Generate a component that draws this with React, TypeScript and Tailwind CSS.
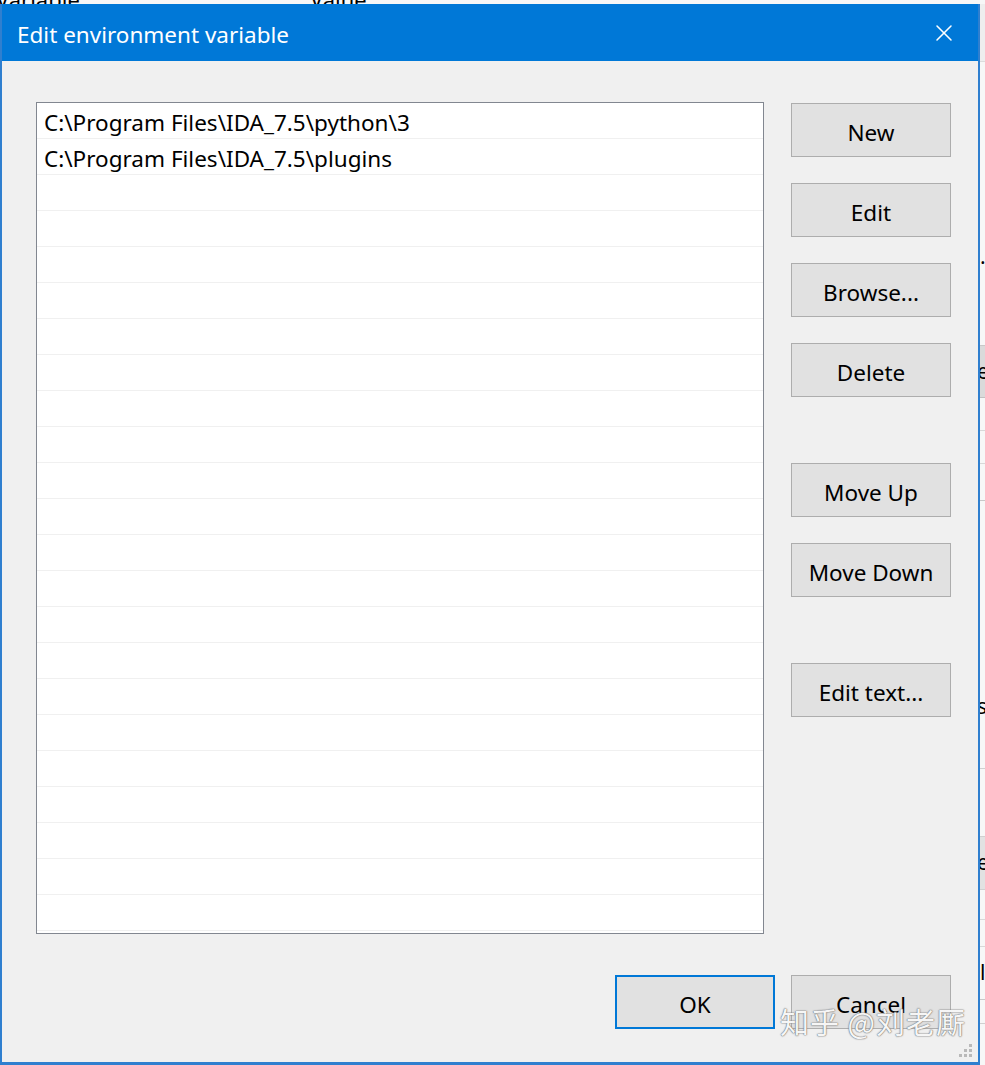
import { X } from "lucide-react";

const paths = ["C:\\Program Files\\IDA_7.5\\python\\3", "C:\\Program Files\\IDA_7.5\\plugins"];

const font = { fontFamily: '"Segoe UI", "Noto Sans", "Open Sans", sans-serif' };

function Btn({ label, primary = false, className = "" }: { label: string; primary?: boolean; className?: string }) {
  return (
    <button
      className={`w-[160px] h-[54px] shrink-0 bg-[#e1e1e1] text-[22.5px] text-black flex items-center justify-center pt-[5px] ${
        primary ? "border-2 border-[#0078d7]" : "border border-[#adadad]"
      } ${className}`}
    >
      {label}
    </button>
  );
}

export default function App() {
  const rows = Array.from({ length: 23 }, (_, i) => paths[i] ?? "");

  return (
    <div className="w-[985px] h-[1065px] overflow-hidden bg-[#f3f3f3] flex flex-col" style={font}>
      {/* background window peeking above */}
      <div className="h-[4px] overflow-hidden relative shrink-0 bg-[#f7f7f7]">
        <div className="absolute left-[-4px] top-[-17px] text-[22px] text-black">Variable</div>
        <div className="absolute left-[310px] top-[-17px] text-[22px] text-black">Value</div>
      </div>

      <div className="flex flex-1">
        <div className="relative w-[980px] flex flex-col border-x-2 border-b-[3px] border-[#2f7fcf] bg-[#f0f0f0]">
          {/* title bar */}
          <div className="h-[57px] bg-[#0078d7] flex items-center justify-between pl-[15px] pr-[20px] pt-[5px] shrink-0">
            <span className="text-white text-[22.5px]">Edit environment variable</span>
            <X className="w-[28px] h-[28px] text-white -mt-[5px]" strokeWidth={1.3} />
          </div>

          {/* body */}
          <div className="flex pl-[34px] pt-[41px] gap-[27px]">
            <div className="w-[728px] h-[832px] bg-white border border-[#828790] overflow-hidden flex flex-col">
              {rows.map((p, i) => (
                <div
                  key={i}
                  className="h-[36px] shrink-0 border-b border-[#f0f0f0] pl-[7px] pt-[6px] flex items-center text-[22.5px] text-black leading-none"
                >
                  {p}
                </div>
              ))}
            </div>

            <div className="flex flex-col pt-[1px]">
              <Btn label="New" />
              <Btn label="Edit" className="mt-[26px]" />
              <Btn label="Browse..." className="mt-[26px]" />
              <Btn label="Delete" className="mt-[26px]" />
              <Btn label="Move Up" className="mt-[66px]" />
              <Btn label="Move Down" className="mt-[26px]" />
              <Btn label="Edit text..." className="mt-[66px]" />
            </div>
          </div>

          {/* footer buttons */}
          <div className="flex pl-[613px] pt-[41px] gap-[16px]">
            <Btn label="OK" primary />
            <Btn label="Cancel" />
          </div>

          {/* watermark */}
          <div
            className="absolute left-[778px] top-[996px] text-[29px] text-white/95 tracking-[1px]"
            style={{
              fontFamily: '"Noto Sans CJK SC", sans-serif',
              textShadow: "0 0 1px #777, 0 0 1px #777, 0 0 2px #999",
            }}
          >
            知乎 @刘老厮
          </div>

          {/* resize grip */}
          <svg className="absolute right-[4px] bottom-[3px]" width="16" height="16" viewBox="0 0 16 16">
            {[
              [11, 1],
              [11, 6],
              [6, 6],
              [11, 11],
              [6, 11],
              [1, 11],
            ].map(([x, y], i) => (
              <rect key={i} x={x} y={y} width="3" height="3" fill="#b9b9b9" />
            ))}
          </svg>
        </div>

        {/* background window sliver on the right */}
        <div className="w-[5px] flex flex-col bg-[#f7f7f7] text-[21px] text-black overflow-hidden">
          <div className="h-[58px] bg-[#eeeeee] border-b border-[#dcdcdc]" />
          <div className="h-[200px]" />
          <div className="h-[84px] border-b border-[#c8c8c8] leading-[0px]">·</div>
          <div className="h-[52px] bg-[#dadada] border-b border-[#c0c0c0] flex items-center -ml-[3px]">e</div>
          <div className="h-[33px] border-b border-[#d8d8d8]" />
          <div className="h-[33px] border-b border-[#d8d8d8]" />
          <div className="h-[37px] border-b border-[#c8c8c8]" />
          <div className="h-[208px] flex flex-col justify-start pt-[190px] -ml-[3px]">s.</div>
          <div className="h-[60px] border-b border-[#d0d0d0]" />
          <div className="h-[68px] border-b border-[#d0d0d0]" />
          <div className="h-[53px] bg-[#e2e2e2] border-b border-[#d0d0d0] flex items-center -ml-[3px]">e</div>
          <div className="h-[30px] border-b border-[#d8d8d8]" />
          <div className="h-[27px] border-b border-[#d8d8d8]" />
          <div className="h-[53px] border-b border-[#c8c8c8] flex items-center">l</div>
          <div className="h-[24px] border-b border-[#d0d0d0]" />
        </div>
      </div>
    </div>
  );
}
